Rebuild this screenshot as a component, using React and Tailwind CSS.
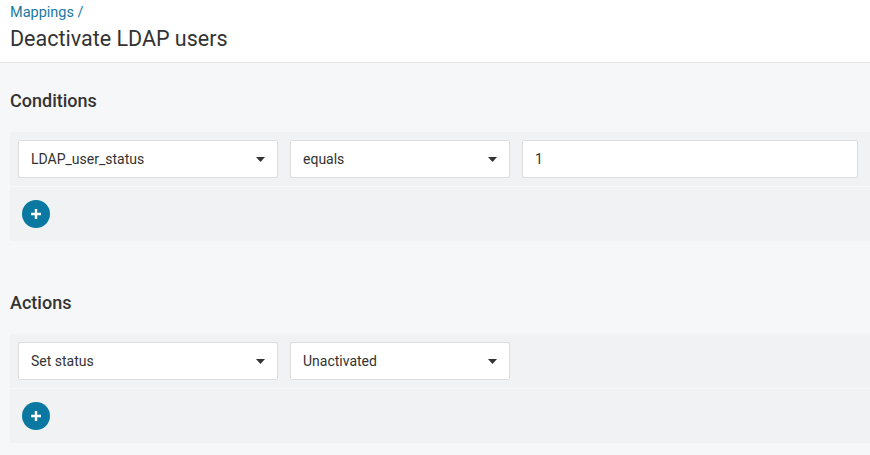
import React from 'react';

const Caret = () => (
  <svg width="9" height="5" viewBox="0 0 9 5" className="shrink-0">
    <path d="M0 0 L9 0 L4.5 5 Z" fill="#333" />
  </svg>
);

const Select = ({ value, width }) => (
  <div
    className={`${width} h-[38px] bg-white border border-[#dcdcdc] rounded-[2px] flex items-center justify-between pl-3 pr-[12px] text-[14px] text-[#333]`}
  >
    <span>{value}</span>
    <Caret />
  </div>
);

const AddButton = () => (
  <button className="w-[28px] h-[28px] rounded-full bg-[#0a78a0] flex items-center justify-center">
    <svg width="12" height="12" viewBox="0 0 12 12">
      <path d="M6 1 V11 M1 6 H11" stroke="#fff" strokeWidth="2.4" />
    </svg>
  </button>
);

const Block = ({ children }) => (
  <div className="ml-[10px] w-[880px] bg-[#f1f2f4]">
    <div className="h-[54px] px-2 flex items-center gap-3">{children}</div>
    <div className="h-[1px] bg-[#f8f9fa]" />
    <div className="h-[54px] px-3 flex items-center">
      <AddButton />
    </div>
  </div>
);

export default function App() {
  return (
    <div className="w-[870px] h-[455px] overflow-hidden bg-[#f6f7f9] font-['Roboto',sans-serif] text-[#333]">
      <header className="h-[63px] bg-white border-b border-[#e4e4e4] px-[10px] pt-[4px]">
        <div className="text-[14.5px] leading-[18px] text-[#1a7aa3]">Mappings /</div>
        <h1 className="text-[21.5px] leading-[34px] text-[#333]">Deactivate LDAP users</h1>
      </header>
      <main>
        <h2 className="px-[10px] pt-[26px] pb-[19px] text-[18px] leading-[24px] font-medium text-[#333]">
          Conditions
        </h2>
        <Block>
          <Select value="LDAP_user_status" width="w-[260px]" />
          <Select value="equals" width="w-[220px]" />
          <div className="w-[336px] h-[38px] bg-white border border-[#dcdcdc] rounded-[2px] flex items-center pl-3 text-[14px] text-[#333]">
            1
          </div>
        </Block>
        <h2 className="px-[10px] pt-[50px] pb-[19px] text-[18px] leading-[24px] font-medium text-[#333]">
          Actions
        </h2>
        <Block>
          <Select value="Set status" width="w-[260px]" />
          <Select value="Unactivated" width="w-[220px]" />
        </Block>
      </main>
    </div>
  );
}
